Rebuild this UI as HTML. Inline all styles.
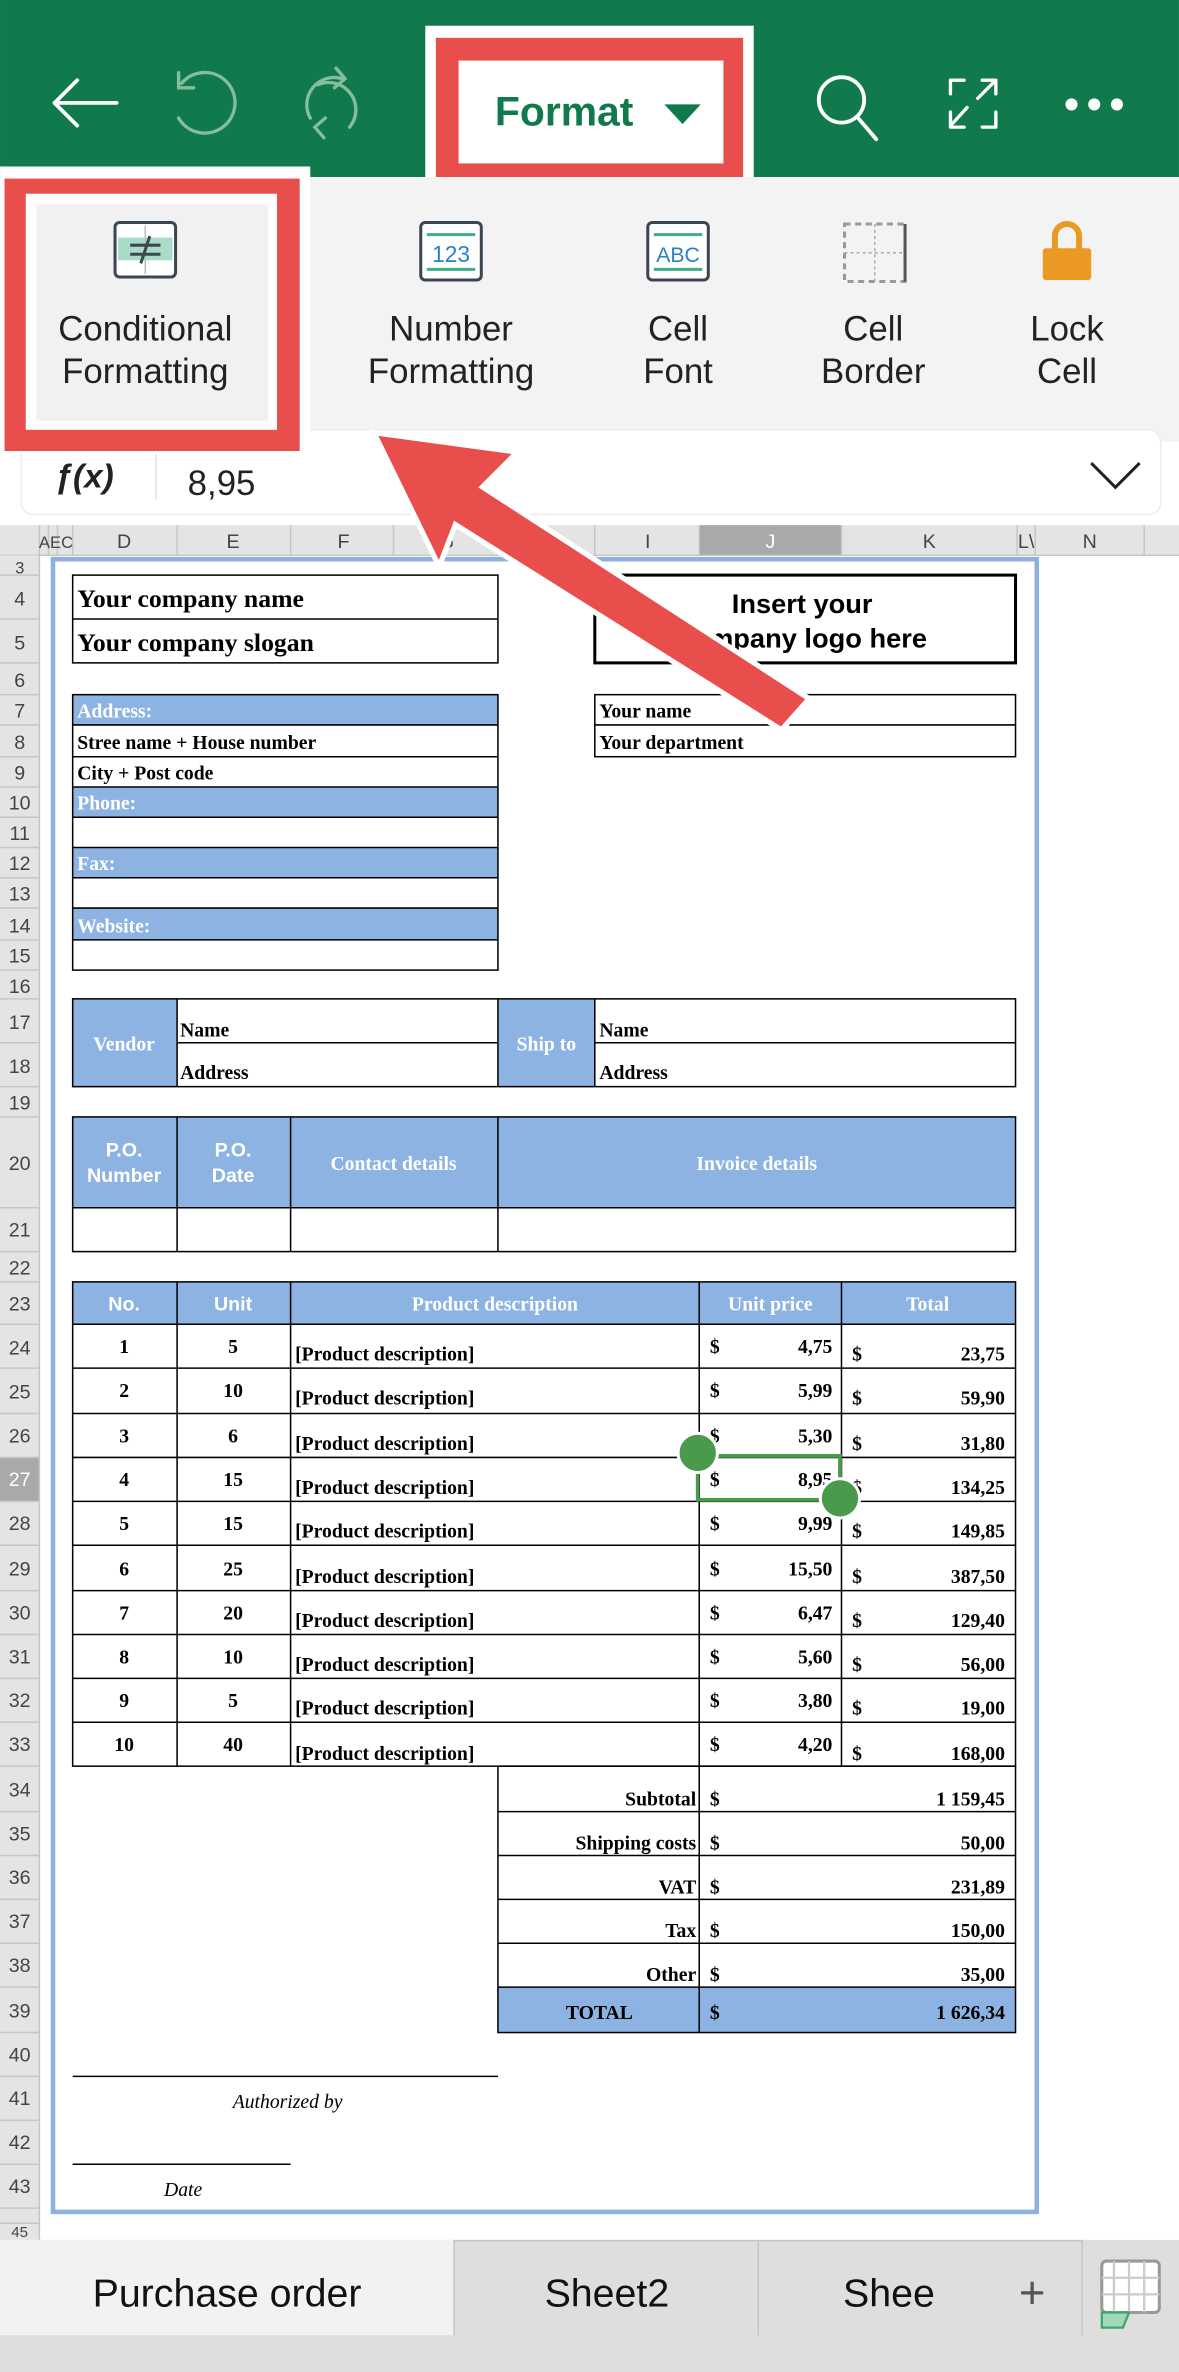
<!DOCTYPE html>
<html><head><meta charset="utf-8"><style>
html,body{margin:0;padding:0;background:#fff;width:1179px;height:2372px;overflow:hidden}
svg{display:block}
.ui{font-family:"Liberation Sans",sans-serif}
.s{font-family:"Liberation Serif",serif;font-weight:bold;font-size:13px}
.w{fill:#fff}
</style></head><body>
<svg width="1179" height="2372" viewBox="0 0 779 1567.3" xmlns="http://www.w3.org/2000/svg">
<!-- header -->
<rect x="0" y="0" width="779" height="117" fill="#107a4c"/>
<g fill="none" stroke="#fff" stroke-width="2.5" stroke-linecap="round" stroke-linejoin="round">
<path d="M36 68H77M51 53L36 68L51 83"/>
<path d="M556 66m-15 0a15 15 0 1 0 30 0a15 15 0 1 0 -30 0M567 78L579 92" stroke-width="2.5"/>
<path d="M628 62V53H637M649 53H658V62M628 74V84H637M658 74V84H649M646 65L657 54M639 71L629 82" stroke-width="2.2"/>
</g>
<g fill="none" stroke="#86bd9e" stroke-width="2.2" stroke-linecap="round">
<path d="M120 55A20 20 0 1 1 118 78M118 48V58H128"/>
<path d="M205 78A18 18 0 0 1 226 52M231 84A18 18 0 0 0 210 56M222 45L228 52L221 58M214 91L208 84L215 78"/>
</g>
<circle cx="708" cy="69" r="4" fill="#fff"/><circle cx="723" cy="69" r="4" fill="#fff"/><circle cx="738" cy="69" r="4" fill="#fff"/>
<rect x="281" y="17" width="217" height="107" fill="#fff"/>
<rect x="288" y="25" width="203" height="92" fill="#e84e4c"/>
<rect x="303" y="40" width="175" height="68" fill="#fff"/>
<text x="327" y="83" class="ui" font-size="27" font-weight="bold" fill="#107a4c">Format</text>
<path d="M439 69H463L451 82Z" fill="#107a4c"/>
<!-- toolbar -->
<rect x="0" y="117" width="779" height="175" fill="#f3f3f3"/>
<rect x="14" y="284" width="753" height="56" rx="8" fill="#fff" stroke="#ececec"/>
<text x="36" y="322" class="ui" font-size="22" font-style="italic" font-weight="bold" fill="#222">ƒ(x)</text>
<line x1="103" y1="298" x2="103" y2="330" stroke="#e2e2e2"/>
<text x="124" y="327" class="ui" font-size="23" fill="#222">8,95</text>
<path d="M721 306L737 322L753 306" fill="none" stroke="#222" stroke-width="2"/>
<rect x="0" y="110" width="205" height="190" fill="#fff"/>
<rect x="3" y="118" width="195" height="180" fill="#e84e4c"/>
<rect x="17" y="128" width="166" height="156" fill="#fff"/>
<rect x="24" y="135" width="153" height="143" fill="#f1f1f1"/>
<g class="ui" font-size="23" fill="#222" text-anchor="middle">
<text x="96" y="225">Conditional</text><text x="96" y="253">Formatting</text>
<text x="298" y="225">Number</text><text x="298" y="253">Formatting</text>
<text x="448" y="225">Cell</text><text x="448" y="253">Font</text>
<text x="577" y="225">Cell</text><text x="577" y="253">Border</text>
<text x="705" y="225">Lock</text><text x="705" y="253">Cell</text>
</g>
<!-- icons -->
<rect x="76" y="147" width="40" height="36" rx="3" fill="#fff" stroke="#3c4650" stroke-width="2"/>
<rect x="78" y="157" width="36" height="15" fill="#a8dcc8"/>
<line x1="96" y1="149" x2="96" y2="181" stroke="#bbb"/>
<path d="M86 162H106M86 168H106M99 156L93 174" stroke="#3c4650" stroke-width="2" fill="none"/>
<rect x="278" y="147" width="40" height="38" rx="3" fill="#fff" stroke="#3c4650" stroke-width="2"/>
<path d="M282 155H314M282 178H314" stroke="#3fae8c" stroke-width="2"/>
<text x="298" y="173" class="ui" font-size="15" text-anchor="middle" fill="#2a7fc9">123</text>
<rect x="428" y="147" width="40" height="38" rx="3" fill="#fff" stroke="#3c4650" stroke-width="2"/>
<path d="M432 155H464M432 178H464" stroke="#3fae8c" stroke-width="2"/>
<text x="448" y="173" class="ui" font-size="14" text-anchor="middle" fill="#2a7fc9">ABC</text>
<rect x="558" y="148" width="40" height="38" fill="none" stroke="#999" stroke-width="2" stroke-dasharray="4 3"/>
<path d="M578 148V186M558 167H598" stroke="#aaa" stroke-dasharray="2 2"/>
<line x1="598" y1="148" x2="598" y2="186" stroke="#555" stroke-width="2"/>
<path d="M697 166V156A8 8 0 0 1 713 156V166" fill="none" stroke="#ea9a22" stroke-width="4"/>
<rect x="689" y="164" width="32" height="21" rx="2" fill="#ea9a22"/>
<!-- col headers -->
<rect x="0" y="347" width="779" height="20" fill="#e4e4e4"/>
<rect x="462" y="347" width="94" height="20" fill="#a9a9a9"/>
<g stroke="#c6c6c6"><path d="M26 347V367M32 347V367M38 347V367M48 347V367M117 347V367M192 347V367M260 347V367M330 347V367M393 347V367M462 347V367M556 347V367M672 347V367M684 347V367M756 347V367M0 367H779"/></g>
<g class="ui" font-size="13" fill="#444" text-anchor="middle">
<text x="37" y="362" font-size="11">AEC</text><text x="82" y="362">D</text><text x="154" y="362">E</text><text x="227" y="362">F</text><text x="295" y="362">G</text><text x="361" y="362">H</text><text x="428" y="362">I</text><text x="509" y="362" fill="#fff">J</text><text x="614" y="362">K</text><text x="678" y="362">L\</text><text x="720" y="362">N</text>
</g>
<!-- row headers -->
<rect x="0" y="367" width="26" height="1113" fill="#e4e4e4"/>
<rect x="0" y="963" width="26" height="29" fill="#a9a9a9"/>
<g stroke="#c6c6c6">
<path d="M26 367V1480M0 380H26M0 409H26M0 438H26M0 459H26M0 479H26M0 500H26M0 520H26M0 540H26M0 560H26M0 580H26M0 600H26M0 621H26M0 641H26M0 660H26M0 689H26M0 718H26M0 738H26M0 798H26M0 827H26M0 847H26M0 875H26M0 904H26M0 934H26M0 963H26M0 992H26M0 1021H26M0 1051H26M0 1080H26M0 1109H26M0 1138H26M0 1167H26M0 1197H26M0 1226H26M0 1255H26M0 1284H26M0 1313H26M0 1343H26M0 1372H26M0 1401H26M0 1430H26M0 1459H26M0 1469H26"/>
</g>
<g class="ui" font-size="13" fill="#444" text-anchor="middle">
<text x="13" y="379" font-size="11">3</text><text x="13" y="400">4</text><text x="13" y="429">5</text><text x="13" y="454">6</text><text x="13" y="474">7</text><text x="13" y="495">8</text><text x="13" y="515">9</text><text x="13" y="535">10</text><text x="13" y="555">11</text><text x="13" y="575">12</text><text x="13" y="595">13</text><text x="13" y="616">14</text><text x="13" y="636">15</text><text x="13" y="656">16</text><text x="13" y="680">17</text><text x="13" y="709">18</text><text x="13" y="733">19</text><text x="13" y="773">20</text><text x="13" y="817">21</text><text x="13" y="842">22</text><text x="13" y="866">23</text><text x="13" y="895">24</text><text x="13" y="924">25</text><text x="13" y="953">26</text><text x="13" y="982" fill="#fff">27</text><text x="13" y="1011">28</text><text x="13" y="1041">29</text><text x="13" y="1070">30</text><text x="13" y="1099">31</text><text x="13" y="1128">32</text><text x="13" y="1157">33</text><text x="13" y="1187">34</text><text x="13" y="1216">35</text><text x="13" y="1245">36</text><text x="13" y="1274">37</text><text x="13" y="1303">38</text><text x="13" y="1333">39</text><text x="13" y="1362">40</text><text x="13" y="1391">41</text><text x="13" y="1420">42</text><text x="13" y="1449">43</text><text x="13" y="1478" font-size="10">45</text>
</g>
<!-- print area -->
<rect x="35" y="369.5" width="650" height="1092" fill="none" stroke="#8db0dd" stroke-width="3"/>
<!-- fills -->
<g fill="#8db3e2">
<rect x="48" y="459" width="281" height="20"/><rect x="48" y="520" width="281" height="20"/><rect x="48" y="560" width="281" height="20"/><rect x="48" y="600" width="281" height="21"/>
<rect x="48" y="660" width="69" height="58"/><rect x="329" y="660" width="64" height="58"/>
<rect x="48" y="738" width="623" height="60"/><rect x="48" y="847" width="623" height="28"/>
<rect x="329" y="1313" width="342" height="30"/>
</g>
<g stroke="#000" stroke-width="1" fill="none">
<rect x="48" y="380" width="281" height="58"/><path d="M48 409H329"/>
<rect x="393" y="380" width="278" height="58" stroke-width="2"/>
<rect x="48" y="459" width="281" height="182"/>
<path d="M48 479H329M48 500H329M48 520H329M48 540H329M48 560H329M48 580H329M48 600H329M48 621H329"/>
<rect x="393" y="459" width="278" height="41"/><path d="M393 479H671"/>
<rect x="48" y="660" width="623" height="58"/><path d="M117 660V718M329 660V718M393 660V718M117 689H329M393 689H671"/>
<rect x="48" y="738" width="623" height="89"/><path d="M48 798H671M117 738V827M192 738V827M329 738V827"/>
<rect x="48" y="847" width="623" height="320"/>
<path d="M117 847V1167M192 847V1167M462 847V1167M556 847V1167M48 875H671M48 904H671M48 934H671M48 963H671M48 992H671M48 1021H671M48 1051H671M48 1080H671M48 1109H671M48 1138H671"/>
<rect x="329" y="1167" width="342" height="176"/>
<path d="M462 1167V1343M329 1197H671M329 1226H671M329 1255H671M329 1284H671M329 1313H671"/>
<path d="M48 1372H329M48 1430H192"/>
</g>
<g class="s">
<text x="51" y="401" font-size="17">Your company name</text>
<text x="51" y="430" font-size="17">Your company slogan</text>
<text class="w" x="51" y="474">Address:</text>
<text x="51" y="495">Stree name + House number</text>
<text x="51" y="515">City + Post code</text>
<text class="w" x="51" y="535">Phone:</text>
<text class="w" x="51" y="575">Fax:</text>
<text class="w" x="51" y="616">Website:</text>
<text x="396" y="474">Your name</text>
<text x="396" y="495">Your department</text>
<text class="w" x="82" y="694" text-anchor="middle">Vendor</text>
<text class="w" x="361" y="694" text-anchor="middle">Ship to</text>
<text x="119" y="685">Name</text><text x="119" y="713">Address</text>
<text x="396" y="685">Name</text><text x="396" y="713">Address</text>
<text class="w" x="260" y="773" text-anchor="middle">Contact details</text>
<text class="w" x="500" y="773" text-anchor="middle">Invoice details</text>
<g class="w" text-anchor="middle"><text x="327" y="866">Product description</text><text x="509" y="866">Unit price</text><text x="613" y="866">Total</text></g>
</g>
<g class="ui" font-weight="bold" font-size="13" fill="#fff" text-anchor="middle">
<text x="82" y="764">P.O.</text><text x="82" y="781">Number</text>
<text x="154" y="764">P.O.</text><text x="154" y="781">Date</text>
<text x="82" y="866">No.</text><text x="154" y="866">Unit</text>
</g>
<text x="530" y="405" class="ui" font-size="18" font-weight="bold" text-anchor="middle">Insert your</text>
<text x="530" y="428" class="ui" font-size="18" font-weight="bold" text-anchor="middle">company logo here</text>
<!-- items -->
<g class="s">
<g text-anchor="middle">
<text x="82" y="894">1</text><text x="154" y="894">5</text>
<text x="82" y="923">2</text><text x="154" y="923">10</text>
<text x="82" y="953">3</text><text x="154" y="953">6</text>
<text x="82" y="982">4</text><text x="154" y="982">15</text>
<text x="82" y="1011">5</text><text x="154" y="1011">15</text>
<text x="82" y="1041">6</text><text x="154" y="1041">25</text>
<text x="82" y="1070">7</text><text x="154" y="1070">20</text>
<text x="82" y="1099">8</text><text x="154" y="1099">10</text>
<text x="82" y="1128">9</text><text x="154" y="1128">5</text>
<text x="82" y="1157">10</text><text x="154" y="1157">40</text>
</g>
<text x="195" y="899">[Product description]</text><text x="195" y="928">[Product description]</text><text x="195" y="958">[Product description]</text><text x="195" y="987">[Product description]</text><text x="195" y="1016">[Product description]</text><text x="195" y="1046">[Product description]</text><text x="195" y="1075">[Product description]</text><text x="195" y="1104">[Product description]</text><text x="195" y="1133">[Product description]</text><text x="195" y="1163">[Product description]</text>
<text x="469" y="894">$</text><text x="469" y="923">$</text><text x="469" y="953">$</text><text x="469" y="982">$</text><text x="469" y="1011">$</text><text x="469" y="1041">$</text><text x="469" y="1070">$</text><text x="469" y="1099">$</text><text x="469" y="1128">$</text><text x="469" y="1157">$</text>
<g text-anchor="end">
<text x="550" y="894">4,75</text><text x="550" y="923">5,99</text><text x="550" y="953">5,30</text><text x="550" y="982">8,95</text><text x="550" y="1011">9,99</text><text x="550" y="1041">15,50</text><text x="550" y="1070">6,47</text><text x="550" y="1099">5,60</text><text x="550" y="1128">3,80</text><text x="550" y="1157">4,20</text>
<text x="664" y="899">23,75</text><text x="664" y="928">59,90</text><text x="664" y="958">31,80</text><text x="664" y="987">134,25</text><text x="664" y="1016">149,85</text><text x="664" y="1046">387,50</text><text x="664" y="1075">129,40</text><text x="664" y="1104">56,00</text><text x="664" y="1133">19,00</text><text x="664" y="1163">168,00</text>
<text x="460" y="1193">Subtotal</text><text x="460" y="1222">Shipping costs</text><text x="460" y="1251">VAT</text><text x="460" y="1280">Tax</text><text x="460" y="1309">Other</text>
<text x="664" y="1193">1 159,45</text><text x="664" y="1222">50,00</text><text x="664" y="1251">231,89</text><text x="664" y="1280">150,00</text><text x="664" y="1309">35,00</text><text x="664" y="1334">1 626,34</text>
</g>
<text x="563" y="899">$</text><text x="563" y="928">$</text><text x="563" y="958">$</text><text x="563" y="987">$</text><text x="563" y="1016">$</text><text x="563" y="1046">$</text><text x="563" y="1075">$</text><text x="563" y="1104">$</text><text x="563" y="1133">$</text><text x="563" y="1163">$</text>
<text x="469" y="1193">$</text><text x="469" y="1222">$</text><text x="469" y="1251">$</text><text x="469" y="1280">$</text><text x="469" y="1309">$</text><text x="469" y="1334">$</text>
<text x="396" y="1334" text-anchor="middle">TOTAL</text>
</g>
<g font-family="Liberation Serif,serif" font-style="italic" font-size="13" text-anchor="middle">
<text x="190" y="1393">Authorized by</text><text x="121" y="1451">Date</text>
</g>
<!-- selection -->
<rect x="461" y="962" width="94" height="29" fill="none" stroke="#4a9a4c" stroke-width="2.5"/>
<circle cx="461" cy="960" r="13" fill="#4a9a4c" stroke="#fff" stroke-width="2"/>
<circle cx="555" cy="990" r="13" fill="#4a9a4c" stroke="#fff" stroke-width="2"/>
<!-- arrow -->
<path d="M250 288L338 300L316 322L532 462L516 480L300 344L290 370Z" fill="#e84e4c" stroke="#fff" stroke-width="7" stroke-linejoin="miter"/>
<path d="M250 288L338 300L316 322L532 462L516 480L300 344L290 370Z" fill="#e84e4c"/>
<!-- tabs -->
<rect x="0" y="1480" width="779" height="88" fill="#dedede"/>
<rect x="0" y="1480" width="300" height="63" fill="#f2f2f2"/>
<path d="M300 1480.5H715M300 1480V1543M501 1480V1543M715 1480V1543" stroke="#c4c4c4" fill="none"/>
<g class="ui" font-size="26" fill="#111" text-anchor="middle">
<text x="150" y="1524">Purchase order</text><text x="401" y="1524">Sheet2</text>
</g>
<text x="557" y="1524" class="ui" font-size="26" fill="#111">Shee</text>
<rect x="624" y="1490" width="50" height="50" fill="#dedede"/>
<text x="682" y="1525" class="ui" font-size="30" fill="#555" text-anchor="middle">+</text>
<rect x="728" y="1494" width="38" height="34" rx="3" fill="#fff" stroke="#999" stroke-width="2"/>
<path d="M736 1494V1528M746 1494V1528M756 1494V1528M728 1505H766M728 1516H766" stroke="#ccc" stroke-width="1.5"/>
<path d="M728 1528H746L742 1538H728Z" fill="#9fd9b9" stroke="#3aa66b" stroke-width="1.5"/>
</svg>
</body></html>
